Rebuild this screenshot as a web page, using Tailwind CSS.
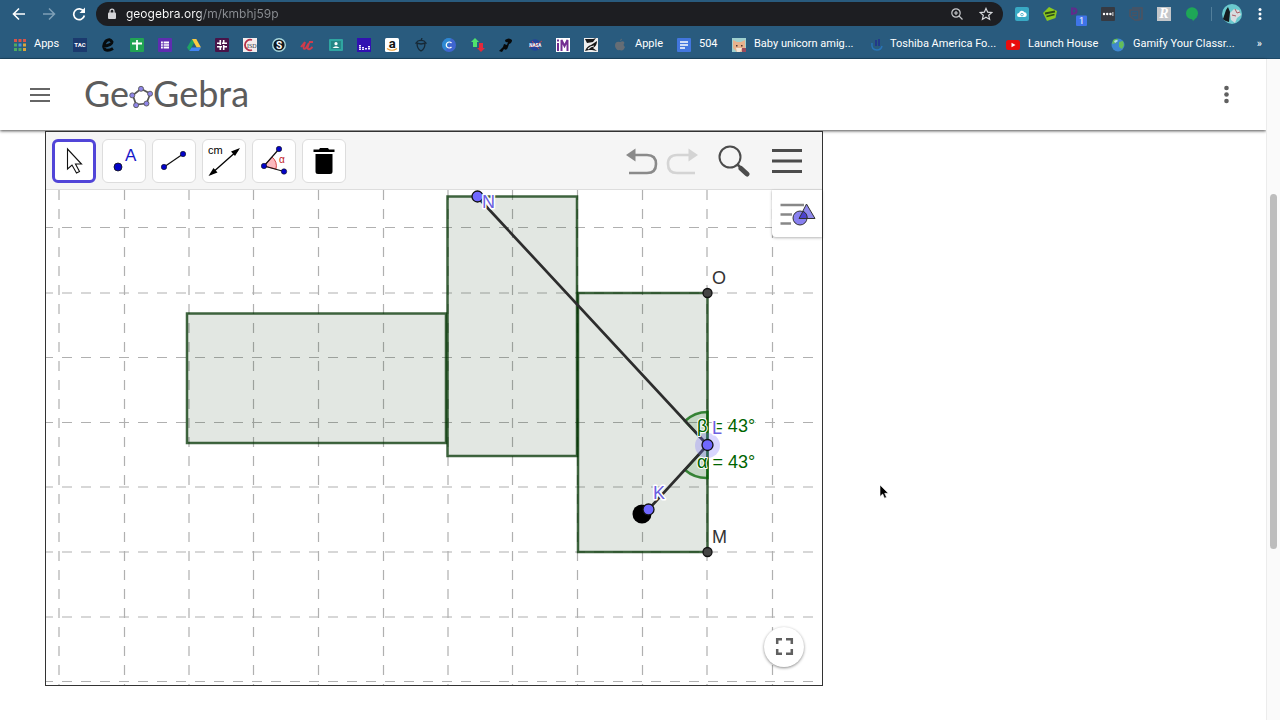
<!DOCTYPE html>
<html lang="en">
<head>
  <meta charset="UTF-8" />
  <meta name="viewport" content="width=device-width, initial-scale=1.0" />
  <title>GeoGebra</title>
  <script src="https://cdn.jsdelivr.net/npm/@tailwindcss/browser@4"></script>
</head>
<body class="flex flex-col h-screen overflow-hidden bg-white font-['Liberation_Sans',sans-serif]">

<!-- Browser bar -->
<div class="shrink-0 bg-[#295b7e] border-b border-[#1d4967] text-white font-[Roboto,sans-serif] text-xs">
  <div class="flex items-center h-7 pr-[18px]">
    <div class="flex items-center gap-4 pl-3 w-24">
      <button aria-label="Back"><svg class="w-3.5 h-3.5" viewBox="0 0 14 14" fill="none" stroke="#fff" stroke-width="1.6"><path d="M13 7H2M7 1.5L1.5 7L7 12.5"/></svg></button>
      <button aria-label="Forward"><svg class="w-3.5 h-3.5" viewBox="0 0 14 14" fill="none" stroke="#7fa0b7" stroke-width="1.5"><path d="M1 7h11M7 1.5L12.5 7L7 12.5"/></svg></button>
      <button aria-label="Reload"><svg class="w-3.5 h-3.5" viewBox="0 0 14 14" fill="none" stroke="#fff" stroke-width="1.7"><path d="M11.8 4.5A5.4 5.4 0 1 0 12.4 8.5"/><path d="M13 0.5V6H7.5Z" fill="#fff" stroke="none"/></svg></button>
    </div>
    <div class="flex items-center flex-1 h-6 rounded-full bg-[#1d1e22] pl-3 pr-2.5">
      <svg class="w-2 h-3" viewBox="0 0 8 12"><path d="M2 5V3.2a2 2 0 0 1 4 0V5" fill="none" stroke="#d5d5d8" stroke-width="1.3"/><rect y="4.5" width="8" height="6.5" rx="1" fill="#d5d5d8"/></svg>
      <input aria-label="Address" value="geogebra.org/m/kmbhj59p" class="flex-1 ml-2.5 outline-none font-[Inter,sans-serif] text-transparent bg-clip-text bg-[linear-gradient(90deg,#ffffff_75px,#8b8e93_75px)]" />
      <button aria-label="Zoom" class="mr-4"><svg class="w-3 h-3" viewBox="0 0 12 12" fill="none" stroke="#c8cacd" stroke-width="1.2"><circle cx="5" cy="5" r="4.2"/><path d="M8 8l3.5 3.5M3 5h4M5 3v4"/></svg></button>
      <button aria-label="Bookmark this tab"><svg class="w-3.5 h-3.5" viewBox="0 0 14 14" fill="none" stroke="#d8dadd" stroke-width="1.2"><path d="M7 1.4l1.7 3.8 4.1.4-3.1 2.7.9 4.1L7 10.3l-3.6 2.1.9-4.1L1.2 5.6l4.1-.4z"/></svg></button>
    </div>
    <!-- extensions -->
    <div class="flex items-center gap-3.5 ml-3">
      <button aria-label="Cloud"><svg class="w-3.5 h-3.5" viewBox="0 0 14 14"><rect width="14" height="14" rx="2" fill="#39a9c4"/><path d="M4 10a2 2 0 0 1 0-4a3 3 0 0 1 5.5-.7A2.4 2.4 0 0 1 10 10z" fill="#fff"/><circle cx="7" cy="7.6" r="1.3" fill="none" stroke="#39a9c4" stroke-width=".8"/></svg></button>
      <button aria-label="Sticker"><svg class="w-3.5 h-3.5" viewBox="0 0 14 14"><path d="M6 0l8 4-1.500 7-8.500 3L0 6z" fill="#8cc820"/><path d="M2 6.500l10-2M3.500 9.500l8-2" stroke="#2c4a18" stroke-width="1.800"/></svg></button>
      <button aria-label="Extension with one notice"><svg class="w-4 h-6" viewBox="0 0 16 24"><path d="M0 6.500h3a2.500 2.500 0 0 1 0 5H0M1 6v7" fill="none" stroke="#602c8b" stroke-width="2"/><rect x="5" y="13.500" width="11" height="10.500" rx="1" fill="#3f74e8"/><text x="8" y="22" font-size="9" fill="#fff">1</text></svg></button>
      <button aria-label="Passwords"><svg class="w-3.5 h-3.5" viewBox="0 0 14 14"><rect width="14" height="14" rx="1" fill="#363a42"/><g fill="#fff"><circle cx="3" cy="7" r="1.200"/><circle cx="6.200" cy="7" r="1.200"/><circle cx="9.400" cy="7" r="1.200"/><path d="M11.500 5h.8v4h-.8z"/></g></svg></button>
      <button aria-label="Notes"><svg class="w-3.5 h-3.5" viewBox="0 0 14 14" fill="none" stroke="#4d5360" stroke-width="1.600"><path d="M3 1h10v11h-3M1 3h9v10H6L1 9zM3 6h5M3 8.500h5"/></svg></button>
      <button aria-label="R" class="w-3.5 h-3.5 bg-[#c4c7ca] text-white font-bold italic text-sm leading-3.5 font-['Liberation_Serif',serif]">R</button>
      <button aria-label="Chat"><svg class="w-3.5 h-3.5" viewBox="0 0 14 14"><circle cx="7" cy="6.300" r="6" fill="#1ea757"/><path d="M6 10h6l-4 4z" fill="#1ea757"/></svg></button>
    </div>
    <div class="w-px h-3.5 ml-3 bg-[#527f9b]"></div>
    <button aria-label="Profile" class="ml-2.5"><svg class="w-5 h-5" viewBox="0 0 20 20"><circle cx="10" cy="10" r="10" fill="#6bc9ce"/><path d="M1 15l3-9 2-3 2 5-1 10a10 10 0 0 1-6-3z" fill="#151a1d"/><path d="M8 9l4-4 5 1 2 5-4 3-2 5-4-3z" fill="#d7dde0"/><path d="M13 5l2 4 3-1M10 11l4 1" stroke="#ae5d66" fill="none"/></svg></button>
    <button aria-label="Browser menu" class="ml-4"><svg class="w-1 h-3.5" viewBox="0 0 4 14" fill="#fff"><circle cx="2" cy="2.500" r="1.500"/><circle cx="2" cy="7" r="1.500"/><circle cx="2" cy="11.500" r="1.500"/></svg></button>
  </div>

  <!-- Bookmarks -->
  <nav class="flex items-center h-[30px] pl-3.5 pt-[3px] whitespace-nowrap text-[11px]">
    <a href="#" class="flex items-center gap-2 w-[59px]">
      <svg class="w-3 h-3" viewBox="0 0 12 12"><path d="M0 0h3v3H0zM4.500 0h3v3h-3zM9 0h3v3H9z" fill="#d95349"/><path d="M0 4.500h3v3H0z" fill="#4cab61"/><path d="M4.500 4.500h3v3h-3z" fill="#4b91e2"/><path d="M9 4.500h3v3H9z" fill="#d8a63c"/><path d="M0 9h3v3H0zM4.500 9h3v3h-3z" fill="#4cab61"/><path d="M9 9h3v3H9z" fill="#d8a63c"/></svg>
      Apps
    </a>
    <div class="flex items-center justify-between w-[554px] shrink-0">
      <a href="#" class="w-3.5 h-3.5 bg-[#1b3a6e] text-[6px] leading-3.5 font-bold text-center">TAC</a>
      <a href="#" aria-label="Edpuzzle"><svg class="w-3.5 h-3.5" viewBox="0 0 14 14" fill="none" stroke="#070b0d" stroke-width="3"><path d="M2 8.500Q11 7 11 4Q9 0 5 3Q1 8 4 11.500Q7 13.500 12 10.500"/></svg></a>
      <a href="#" aria-label="Sheets"><svg class="w-3.5 h-3.5" viewBox="0 0 14 14"><rect width="14" height="14" rx="1" fill="#21a453"/><path d="M7 2v10M2 5.500h10" stroke="#fff" stroke-width="1.800"/></svg></a>
      <a href="#" aria-label="Forms"><svg class="w-3.5 h-3.5" viewBox="0 0 14 14"><rect width="14" height="14" rx="1" fill="#5f2db0"/><path d="M3 3.500h8v7H3z" fill="#fff"/><path d="M3 5.800h8M3 8.200h8M5.300 3v8" stroke="#5f2db0" stroke-width=".8"/></svg></a>
      <a href="#" aria-label="Drive"><svg class="w-3.5 h-3.5" viewBox="0 0 14 14"><path d="M5 1L0 9.500 2.300 13 7.200 4.600z" fill="#1ea363"/><path d="M5 1h4.300l4.700 8.500H9.700z" fill="#fbcb43"/><path d="M4.600 9.500H14L11.800 13H2.300z" fill="#4285f4"/></svg></a>
      <a href="#" aria-label="Slack"><svg class="w-3.5 h-3.5" viewBox="0 0 14 14"><rect width="14" height="14" rx="1" fill="#481449"/><path d="M5.300 2v5M8.700 7v5M2 8.700h5M7 5.300h5M5.300 8.500V12M8.700 2v3.500M2 5.300h3M9 8.700h3" stroke="#fff" stroke-width="1.600"/></svg></a>
      <a href="#" aria-label="ISD"><svg class="w-3.5 h-3.5" viewBox="0 0 14 14"><path d="M0 0h14v14H0z" fill="#f3eced"/><path d="M9 2A5.300 5.300 0 1 0 9 12" fill="none" stroke="#b63047" stroke-width="1.800"/><text x="4" y="9.500" font-size="6" fill="#343640" font-family="Liberation Serif">ISD</text></svg></a>
      <a href="#" aria-label="S"><svg class="w-3.5 h-3.5" viewBox="0 0 14 14"><circle cx="7" cy="7" r="6.300" fill="#101820" stroke="#a9d9df" stroke-width="1.400"/><text x="3.900" y="10.500" font-size="10" font-weight="700" fill="#fff">S</text></svg></a>
      <a href="#" aria-label="Udemy"><svg class="w-3.5 h-3.5" viewBox="0 0 14 14" fill="none" stroke="#d03b4b" stroke-width="1.900"><path d="M1 9l4-5-1.500 5q0 3 2.500 1l3-5-1.500 5q1 3 5-1M9 4h4"/></svg></a>
      <a href="#" aria-label="Classroom"><svg class="w-3.5 h-3.5" viewBox="0 0 14 14"><rect y="1" width="14" height="12" rx="1" fill="#2fa5a1"/><rect x="2" y="3" width="10" height="8" fill="#258685"/><circle cx="7" cy="5.700" r="1.600" fill="#fff"/><path d="M3.500 10q3.500-3.500 7 0z" fill="#fff"/></svg></a>
      <a href="#" aria-label="Deezer"><svg class="w-3.5 h-3.5" viewBox="0 0 14 14"><path d="M0 0h14v14H0z" fill="#3111b1"/><path d="M3 7v5M6 9v3M9 10v2M12 8v4" stroke="#eeeaff" stroke-width="2" stroke-dasharray="1.500 .5"/></svg></a>
      <a href="#" aria-label="Amazon"><svg class="w-3.5 h-3.5 overflow-visible" viewBox="0 0 14 14"><rect width="14" height="14" rx="1.500" fill="#fff"/><text x="3.700" y="9.500" font-size="13" font-weight="700" fill="#111">a</text><path d="M2 10.500q5 3.500 10 0" fill="none" stroke="#ed9b2b" stroke-width="1.200"/></svg></a>
      <a href="#" aria-label="Acorn"><svg class="w-3.5 h-3.5" viewBox="0 0 14 14" fill="none" stroke="#172936" stroke-width="1.300"><path d="M2 5q2-3 5-2.500Q10 2 12 5L7 6zM3 5q0 6 4 8 4-2 4-8M7 3L8 0"/></svg></a>
      <a href="#" aria-label="Canva"><svg class="w-3.5 h-3.5" viewBox="0 0 14 14"><circle cx="7" cy="7" r="7" fill="#3f65cf"/><path d="M0 7a7 7 0 0 1 9-6.600L4 12.500A7 7 0 0 1 0 7z" fill="#2d8ad2"/><path d="M9.500 5A3 3 0 1 0 9.500 9" fill="none" stroke="#fff" stroke-width="1.200"/></svg></a>
      <a href="#" aria-label="Exchange"><svg class="w-3.5 h-3.5" viewBox="0 0 14 14"><path d="M4 0L8 4H6v5H2V4H0z" fill="#4fe36c"/><path d="M8 5h4v5h2l-4 4-4-4h2z" fill="#e4293c"/></svg></a>
      <a href="#" aria-label="Flocabulary"><svg class="w-3.5 h-3.5" viewBox="0 0 14 14"><path d="M6 2q4-3 7 0 0 3-3 4l-1 3q-1 4-4 2l-2 3-3-1 4-4 1-3 3 1 1-3q-3 1-3-2z" fill="#07090a"/></svg></a>
      <a href="#" aria-label="NASA"><svg class="w-3.5 h-3.5" viewBox="0 0 14 14"><circle cx="7" cy="7" r="5.800" fill="#23449a"/><path d="M1 9Q8 9 14 3M4 3l7 8" stroke="#b84450" fill="none"/><text x="1.300" y="9" font-size="4.500" font-weight="700" fill="#fff">NASA</text></svg></a>
      <a href="#" aria-label="iM"><svg class="w-3.5 h-3.5" viewBox="0 0 14 14"><path d="M0 0h14v14H0z" fill="#fff"/><path d="M2 5v8M5.500 13V2l3 6 3-6v11" fill="none" stroke="#732c91" stroke-width="2"/><path d="M1 1.500h2v2H1z" fill="#732c91"/></svg></a>
      <a href="#" aria-label="Sketch"><svg class="w-3.5 h-3.5" viewBox="0 0 14 14"><path d="M0 0h14v14H0z" fill="#eee"/><path d="M1 1h8l3-1-3 4-6 1zM1 13q2-5 6-6l6-4q0 5-4 7l4 3-5-1-3 0z" fill="#171717"/><path d="M4 11q3-3 6-3" fill="none" stroke="#eee" stroke-width="1.200"/></svg></a>
      <a href="#" aria-label="Apple"><svg class="w-3.5 h-3.5" viewBox="0 0 14 14" fill="#656d75"><path d="M7 4Q11 2 11.500 5q-2 2 .5 4-2 5-5 3-4 1-5-4 0-5 5-4zM7 3q0-2 2-2.500Q9 2.500 7 3z"/></svg></a>
    </div>
    <a href="#" class="w-[50px] pl-2 shrink-0">Apple</a>
    <a href="#" class="flex items-center gap-2 w-[55px] shrink-0">
      <svg class="w-3.5 h-3.5" viewBox="0 0 14 14"><rect width="14" height="14" rx="1" fill="#4276df"/><path d="M3 4h8M3 7h8M3 10h5" stroke="#fff" stroke-width="1.400"/></svg>504
    </a>
    <a href="#" class="flex items-center gap-2 w-[138px] shrink-0">
      <svg class="w-3.5 h-3.5" viewBox="0 0 14 14"><path d="M0 0h14v14H0z" fill="#9fd0cf"/><path d="M1 2l4 2h4l4-2v8l-4 4H5l-4-4z" fill="#e9b18c"/><path d="M4 10h6l-2 4H5z" fill="#f3e5d5"/><path d="M4 7h1.500v1.500H4zM9 7h1.500v1.500H9z" fill="#4f332f"/><path d="M10 10h4v4h-4z" fill="#9a4a5c"/></svg>Baby unicorn amig...
    </a>
    <a href="#" class="flex items-center gap-1.5 w-[136px] shrink-0">
      <svg class="w-3.5 h-3.5" viewBox="0 0 14 14" fill="none"><path d="M2 5q-1 7 5 7 4 0 5-4" stroke="#2874b8" stroke-width="1.500"/><path d="M6 2v6M9 1v7" stroke="#21318e" stroke-width="1.600"/></svg>Toshiba America Fo...
    </a>
    <a href="#" class="flex items-center gap-2 w-[105px] shrink-0">
      <svg class="w-3.5 h-3.5" viewBox="0 0 14 14"><rect y="2" width="14" height="10" rx="2.500" fill="#e80c0c"/><path d="M5.500 4.700v4.600l4-2.300z" fill="#fff"/></svg>Launch House
    </a>
    <a href="#" class="flex items-center gap-2">
      <svg class="w-3.5 h-3.5" viewBox="0 0 14 14"><circle cx="7" cy="7" r="6.500" fill="#3f87d0"/><path d="M2 2q3-2 5-1l-2 4-4 1zM8 4l4-1 1 4-2 4-3-2z" fill="#65bd59"/><path d="M3 3q3-2 4 0l-3 2z" fill="#b9dff2"/></svg>Gamify Your Classr...
    </a>
    <button class="ml-auto mr-[18px]" aria-label="More bookmarks">»</button>
  </nav>
</div>

<!-- Page -->
<div class="flex flex-1 min-h-0">
  <div class="flex-1">
    <header class="flex items-center h-[71px] pl-[30px] pr-[34px] bg-white shadow-[0_1px_3px_rgba(0,0,0,0.7)]">
      <button aria-label="Main menu"><svg class="w-5 h-3.5" viewBox="0 0 20 14" stroke="#666" stroke-width="2"><path d="M0 1h20M0 7h20M0 13h20"/></svg></button>
      <a href="#" class="flex items-center ml-[34px] pb-1 text-4xl leading-10 font-[Lato,sans-serif] text-[#5c5c5c]">
        Ge<svg class="w-6 h-6 mt-2" viewBox="0 0 22 22"><path d="M11 3.500L19.500 8 16 17 6.500 18 3.500 9.500z" fill="none" stroke="#555" stroke-width="1.600"/><g fill="#8f86e8" stroke="#555" stroke-width=".8"><circle cx="11" cy="3.500" r="2.300"/><circle cx="19.300" cy="8" r="2.300"/><circle cx="16" cy="17" r="2.300"/><circle cx="6.500" cy="18.500" r="2.300"/><circle cx="3" cy="9.500" r="2.300"/></g></svg>Gebra
      </a>
      <button aria-label="More options" class="ml-auto w-3 flex justify-center"><svg class="w-[5px] h-[19px]" viewBox="0 0 5 19" fill="#606060"><circle cx="2.500" cy="3" r="2.300"/><circle cx="2.500" cy="9.500" r="2.300"/><circle cx="2.500" cy="16" r="2.300"/></svg></button>
    </header>

    <!-- Applet -->
    <main class="relative w-[778px] ml-[45px] mt-px border border-[#333] bg-white">
      <div class="flex items-center h-[58px] pl-1.5 pr-2 gap-1.5 bg-[#f5f5f5] border-b border-[#ddd]">
        <button aria-label="Move" class="w-11 h-11 rounded-md bg-white border-3 border-[#5145d8] flex items-center justify-center">
          <svg class="w-10 h-10 shrink-0" viewBox="0 0 40 40"><path d="M13.500 8v20l4.500-4 4.500 8 3-1.500-4-7.500h6z" fill="#fff" stroke="#111" stroke-width="1.100"/></svg>
        </button>
        <button aria-label="Point" class="w-11 h-11 rounded-md bg-white border border-[#ddd]">
          <svg class="w-full h-full" viewBox="0 0 42 42"><circle cx="15" cy="27" r="4" fill="#0303c8" stroke="#111" stroke-width=".8"/><text x="22" y="21" font-size="17" fill="#1616c8" font-family="Liberation Sans">A</text></svg>
        </button>
        <button aria-label="Segment" class="w-11 h-11 rounded-md bg-white border border-[#ddd]">
          <svg class="w-full h-full" viewBox="0 0 42 42"><path d="M11 27L30 14" stroke="#111" stroke-width="1.200"/><g fill="#0303c8" stroke="#111" stroke-width=".6"><circle cx="11" cy="27" r="2.700"/><circle cx="30" cy="14" r="2.700"/></g></svg>
        </button>
        <button aria-label="Distance or length" class="w-11 h-11 rounded-md bg-white border border-[#ddd]">
          <svg class="w-full h-full" viewBox="0 0 42 42"><text x="5" y="14" font-size="11" font-family="Liberation Sans">cm</text><path d="M8 34L35 10" stroke="#000" stroke-width="1.300"/><path d="M5.500 36l9-3.500-4-4.500zM37 8l-9 3.500 4 4.500z"/></svg>
        </button>
        <button aria-label="Angle" class="w-11 h-11 rounded-md bg-white border border-[#ddd]">
          <svg class="w-full h-full" viewBox="0 0 42 42"><path d="M11 26L19 17a12 12 0 0 1 4 12z" fill="#fbb9bd" stroke="#c22" stroke-width=".8"/><path d="M26 9L11 26 31 31.500" fill="none" stroke="#111" stroke-width="1.200"/><text x="26" y="23" font-size="10" fill="#c11a24" font-family="Liberation Sans">α</text><g fill="#0303c8" stroke="#111" stroke-width=".6"><circle cx="26" cy="9" r="2.700"/><circle cx="11" cy="26" r="2.700"/><circle cx="31" cy="31.500" r="2.700"/></g></svg>
        </button>
        <button aria-label="Delete" class="w-11 h-11 rounded-md bg-white border border-[#ddd]">
          <svg class="w-full h-full" viewBox="0 0 42 42"><path d="M10.500 9.500H16l1-1.500h8l1 1.500h5.500V12h-21zM12.500 14h17v17.500q0 2.500-2.500 2.500H15q-2.500 0-2.500-2.500z"/></svg>
        </button>
        <div class="flex items-center ml-auto mr-3">
          <button aria-label="Undo"><svg class="w-8 h-7" viewBox="0 0 32 28"><path d="M9 8h12q9 0 9 9t-9 9H3" fill="none" stroke="#8a8a8a" stroke-width="2.600"/><path d="M0 8L9.500 1.500v13z" fill="#8a8a8a"/></svg></button>
          <button aria-label="Redo" class="ml-2"><svg class="w-8 h-7" viewBox="0 0 32 28"><path d="M23 8H11q-9 0-9 9t9 9h18" fill="none" stroke="#d4d4d4" stroke-width="2.600"/><path d="M32 8L22.500 1.500v13z" fill="#d4d4d4"/></svg></button>
          <button aria-label="Search" class="ml-5"><svg class="w-8 h-8" viewBox="0 0 32 32"><circle cx="12" cy="12" r="10.500" fill="none" stroke="#4c4c4c" stroke-width="2"/><path d="M19 19l4 4" stroke="#4c4c4c" stroke-width="2.500"/><path d="M23 23.500l6 5.500" stroke="#4c4c4c" stroke-width="5" stroke-linecap="round"/></svg></button>
          <button aria-label="Menu" class="ml-[22px]"><svg class="w-[30px] h-6" viewBox="0 0 30 24" stroke="#4c4c4c" stroke-width="3"><path d="M0 1.500h30M0 12h30M0 22.500h30"/></svg></button>
        </div>
      </div>

      <!-- Graphics view -->
      <svg class="block w-full" viewBox="0 0 776 495" font-family="Liberation Sans" font-size="18">
        <g fill="none" stroke="#b0b0b0" stroke-width="1.200" stroke-dasharray="10 9">
          <path d="M-3 37.500H776M-3 103H776M-3 167.500H776M-3 232.500H776M-3 297H776M-3 362H776M-3 427H776M-3 491.500H776"/>
          <path d="M13 0V495M78.500 0V495M143 0V495M207.500 0V495M272.500 0V495M337.500 0V495M402 0V495M466.500 0V495M531.500 0V495M596.500 0V495M661 0V495M726.500 0V495"/>
        </g>
        <g fill="#002800" fill-opacity=".115" stroke="#003300" stroke-opacity=".75" stroke-width="2.500">
          <path d="M141 123.500H400V253H141z"/>
          <path d="M401.500 6.500H531V266H401.500z"/>
          <path d="M532 103H661.500V362H532z"/>
        </g>
        <g fill="#006400" fill-opacity=".12" stroke="#006400" stroke-opacity=".75" stroke-width="2.500">
          <path d="M661.500 255V222A33 33 0 0 0 639 231z"/>
          <path d="M661.500 255V288A33 33 0 0 1 639 280z"/>
        </g>
        <path d="M431 6.500L661.500 255 602 320" fill="none" stroke="#2d2d2d" stroke-width="2.700"/>
        <circle cx="596" cy="324" r="9.500"/>
        <circle cx="661.500" cy="255.500" r="12.500" fill="#7d75ff" fill-opacity=".3"/>
        <g stroke="#111" stroke-width="1.300">
          <g fill="#7068ff"><circle cx="431.500" cy="6.500" r="5.500"/><circle cx="602.500" cy="319.500" r="5.500"/><circle cx="661.500" cy="255" r="5.500"/></g>
          <g fill="#444"><circle cx="661.500" cy="103" r="4.500"/><circle cx="661.500" cy="362" r="4.500"/></g>
        </g>
        <g stroke="#fff" stroke-width="2" stroke-linejoin="round" paint-order="stroke">
          <g fill="#006400"><text x="651" y="242">β = 43°</text><text x="651" y="278">α = 43°</text></g>
          <g fill="#6b61e0" stroke-width="3"><text x="436" y="18">N</text><text x="607" y="309">K</text><text x="666" y="244">L</text></g>
          <g fill="#333"><text x="666" y="94">O</text><text x="666" y="353">M</text></g>
        </g>
      </svg>

      <button aria-label="Style bar" class="absolute right-0 top-[58px] w-[50px] h-[47px] bg-white rounded-bl shadow-[0_1px_3px_rgba(0,0,0,0.3)]">
        <svg class="w-full h-full" viewBox="0 0 50 46"><path d="M8.500 14.500H32M8.500 24H20M8.500 33H19" stroke="#888" stroke-width="2.600"/><path d="M34.500 13.500L43 28H27z" fill="#8f88ed" stroke="#333"/><circle cx="28" cy="27.500" r="7" fill="#8880f0" stroke="#333"/><path d="M31 20.800A7 7 0 0 1 35 28H27z" fill="#4c42ce" stroke="#333"/></svg>
      </button>
      <button aria-label="Fullscreen" class="absolute right-[18px] bottom-[18px] w-10 h-10 rounded-full bg-white shadow-[0_1px_3px_rgba(0,0,0,0.45)]">
        <svg class="w-full h-full" viewBox="0 0 40 40" fill="none" stroke="#606060" stroke-width="2.500"><path d="M13.200 17v-4.800H18M22 12.200h5.800V17M27.800 22v4.800H22M18 26.800h-4.800V22"/></svg>
      </button>
    </main>
  </div>

  <!-- scrollbar -->
  <div class="w-3.5 shrink-0 bg-[#fafafa] border-l border-[#ececec] flex justify-center pt-[135px]">
    <div class="w-[7px] h-[355px] rounded-full bg-[#bdbdbd]"></div>
  </div>
</div>

<!-- mouse pointer -->
<svg class="absolute left-[879px] top-[484px] w-3 h-4" viewBox="0 0 12 16"><path d="M1 1v11.500l2.700-2.500 1.800 4.200 2-.9-1.800-4h3.600z" stroke="#fff" stroke-width=".6"/></svg>

</body>
</html>
